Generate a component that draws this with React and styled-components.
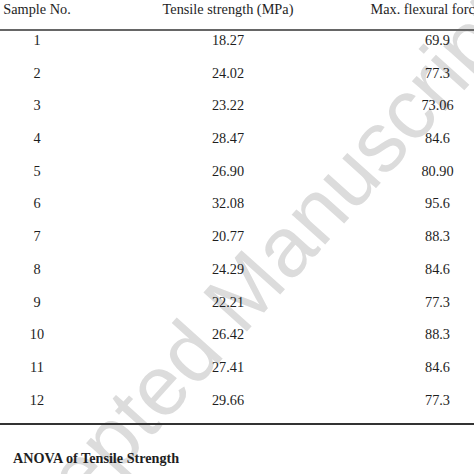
import React from "react";
import styled, { createGlobalStyle } from "styled-components";

const Global = createGlobalStyle`
  html, body { margin: 0; padding: 0; background: #fff; }
  body { width: 474px; height: 474px; overflow: hidden; }
`;

const Page = styled.div`
  position: relative;
  width: 474px;
  height: 474px;
  overflow: hidden;
  background: #fff;
  font-family: "Liberation Serif", "Times New Roman", serif;
  color: #1e1e1e;
`;

const Watermark = styled.div`
  position: absolute;
  left: 233px;
  top: 303px;
  width: 900px;
  transform: translate(-50%, -50%) rotate(-48deg);
  text-align: center;
  font-family: "Liberation Sans", Arial, sans-serif;
  font-size: 85px;
  line-height: 1;
  color: #dcdcdc;
  white-space: nowrap;
  pointer-events: none;
  z-index: 0;
`;

const Table = styled.div`
  position: relative;
  z-index: 1;
  width: 493px;
`;

const Row = styled.div`
  display: grid;
  grid-template-columns: 74px 308px 111px;
  height: ${(p) => p.$h}px;
  align-items: ${(p) => (p.$head ? "center" : "start")};
  border-bottom: ${(p) => (p.$rule ? `2px solid ${p.$rule}` : "none")};
  box-sizing: border-box;
`;

const Cell = styled.div`
  display: flex;
  justify-content: center;
  margin-top: ${(p) => (p.$head ? "-12px" : "0")};
  font-size: 14.3px;
  line-height: 18px;
  white-space: nowrap;
`;

const Caption = styled.div`
  position: relative;
  z-index: 1;
  padding: 24px 0 0 13px;
  font-weight: bold;
  font-size: 14.2px;
  line-height: 18px;
`;

const data = [
  ["1", "18.27", "69.9"],
  ["2", "24.02", "77.3"],
  ["3", "23.22", "73.06"],
  ["4", "28.47", "84.6"],
  ["5", "26.90", "80.90"],
  ["6", "32.08", "95.6"],
  ["7", "20.77", "88.3"],
  ["8", "24.29", "84.6"],
  ["9", "22.21", "77.3"],
  ["10", "26.42", "88.3"],
  ["11", "27.41", "84.6"],
  ["12", "29.66", "77.3"],
];

export default function App() {
  return (
    <Page>
      <Global />
      <Watermark>Accepted Manuscript</Watermark>
      <Table>
        <Row $head $h={31} $rule="#666">
          <Cell $head><span>Sample No.</span></Cell>
          <Cell $head><span>Tensile strength (MPa)</span></Cell>
          <Cell $head><span>Max. flexural force (N)</span></Cell>
        </Row>
        {data.map((r, i) => (
          <Row
            key={r[0]}
            $h={i === data.length - 1 ? 34 : 32.7}
            $rule={i === data.length - 1 ? "#333" : null}
          >
            <Cell><span>{r[0]}</span></Cell>
            <Cell><span>{r[1]}</span></Cell>
            <Cell><span>{r[2]}</span></Cell>
          </Row>
        ))}
      </Table>
      <Caption>ANOVA of Tensile Strength</Caption>
    </Page>
  );
}
